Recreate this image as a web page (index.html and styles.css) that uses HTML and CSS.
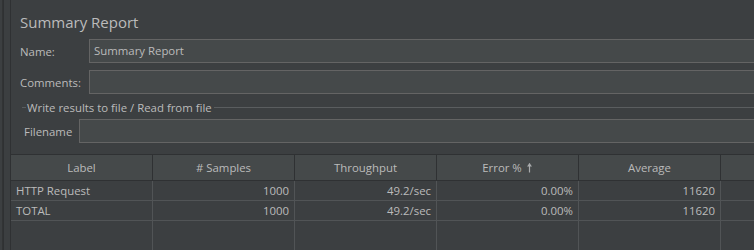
FILE: index.html
```html
<!DOCTYPE html>
<html>
<head>
<meta charset="utf-8">
<link rel="stylesheet" href="styles.css">
</head>
<body>
<div class="app">
  <div class="rail"><div class="rail-inner"></div></div>
  <div class="panel">
    <div class="title">Summary Report</div>
    <div class="form">
      <div class="row">
        <label class="lbl">Name:</label>
        <div class="field">Summary Report</div>
      </div>
      <div class="row">
        <label class="lbl">Comments:</label>
        <div class="field"></div>
      </div>
    </div>
    <div class="group">
      <div class="legend"><span class="dash"></span><span class="legend-text">Write results to file / Read from file</span><span class="rule"></span></div>
      <div class="row file-row">
        <label class="lbl file-lbl">Filename</label>
        <div class="field"></div>
      </div>
    </div>
    <div class="table">
      <div class="tr head">
        <div class="td">Label</div>
        <div class="td"># Samples</div>
        <div class="td">Throughput</div>
        <div class="td">Error % <svg class="sort" width="7" height="11" viewBox="0 0 7 11"><path d="M3.5 1.5V10.5" stroke="#a9abad" stroke-width="1.2" fill="none"/><path d="M1 4.5L3.5 1L6 4.5Z" fill="#a9abad"/></svg></div>
        <div class="td">Average</div>
        <div class="td"></div>
      </div>
      <div class="tr">
        <div class="td left">HTTP Request</div>
        <div class="td">1000</div>
        <div class="td">49.2/sec</div>
        <div class="td">0.00%</div>
        <div class="td">11620</div>
        <div class="td"></div>
      </div>
      <div class="tr">
        <div class="td left">TOTAL</div>
        <div class="td">1000</div>
        <div class="td">49.2/sec</div>
        <div class="td">0.00%</div>
        <div class="td">11620</div>
        <div class="td"></div>
      </div>
      <div class="tr empty">
        <div class="td"></div>
        <div class="td"></div>
        <div class="td"></div>
        <div class="td"></div>
        <div class="td"></div>
        <div class="td"></div>
      </div>
    </div>
  </div>
</div>
</body>
</html>
```
FILE: styles.css
```css
html, body {
  margin: 0;
  padding: 0;
  background: #3c3f41;
  overflow: hidden;
}
body {
  width: 754px;
  height: 250px;
  font-family: "Open Sans", "Noto Sans", sans-serif;
  font-size: 11.4px;
  color: #bbbbbb;
}
.app {
  display: flex;
  height: 250px;
  overflow: hidden;
}
.rail {
  width: 2px;
  flex: none;
  border-right: 1px solid #323435;
  display: flex;
}
.rail-inner {
  width: 6px;
  margin-left: 3px;
  border-right: 1px solid #2f3133;
}
.panel {
  flex: none;
  width: 900px;
  margin-left: 7px;
  border-left: 1px solid #2f3133;
  display: flex;
  flex-direction: column;
}
.title {
  font-size: 15px;
  line-height: 20px;
  margin: 12px 0 0 9px;
  color: #bbbbbb;
}
.form {
  margin-top: 7px;
  display: flex;
  flex-direction: column;
  gap: 7px;
}
.row {
  display: flex;
  align-items: center;
  height: 24px;
}
.lbl {
  padding-left: 9px;
  box-sizing: border-box;
  flex: none;
  width: 78px;
}
.field {
  flex: 1;
  height: 24px;
  box-sizing: border-box;
  border: 1px solid #646464;
  background: #45494a;
  padding: 0 4px;
  line-height: 22px;
}
.group {
  margin-top: 5px;
}
.legend {
  display: flex;
  align-items: center;
  height: 16px;
  margin-left: 11px;
}
.dash {
  width: 4px;
  height: 1px;
  background: #5a5d5f;
}
.legend-text {
  padding: 0 2px 0 1px;
}
.rule {
  flex: 1;
  height: 1px;
  background: #5a5d5f;
}
.file-row {
  margin-top: 4px;
}
.file-lbl {
  padding-left: 13px;
  width: 68px;
}
.table {
  margin-top: 11px;
  border-top: 1px solid #2f3133;
  display: flex;
  flex-direction: column;
}
.tr {
  display: grid;
  grid-template-columns: repeat(6, 142px);
  border-bottom: 1px solid #515456;
}
.tr.head {
  background: #45494a;
  border-bottom: 1px solid #2f3133;
}
.td {
  border-right: 1px solid #515456;
  height: 19px;
  line-height: 19px;
  text-align: right;
  padding: 0 5px;
  box-sizing: border-box;
  white-space: nowrap;
}
.tr.head .td {
  height: 25px;
  line-height: 25px;
  text-align: center;
  border-right: 1px solid #2f3133;
}
.td.left {
  text-align: left;
}
.tr.empty {
  border-bottom: none;
}
.tr.empty .td {
  height: 40px;
}
.sort {
  vertical-align: -1px;
  margin-left: 1px;
}
```
